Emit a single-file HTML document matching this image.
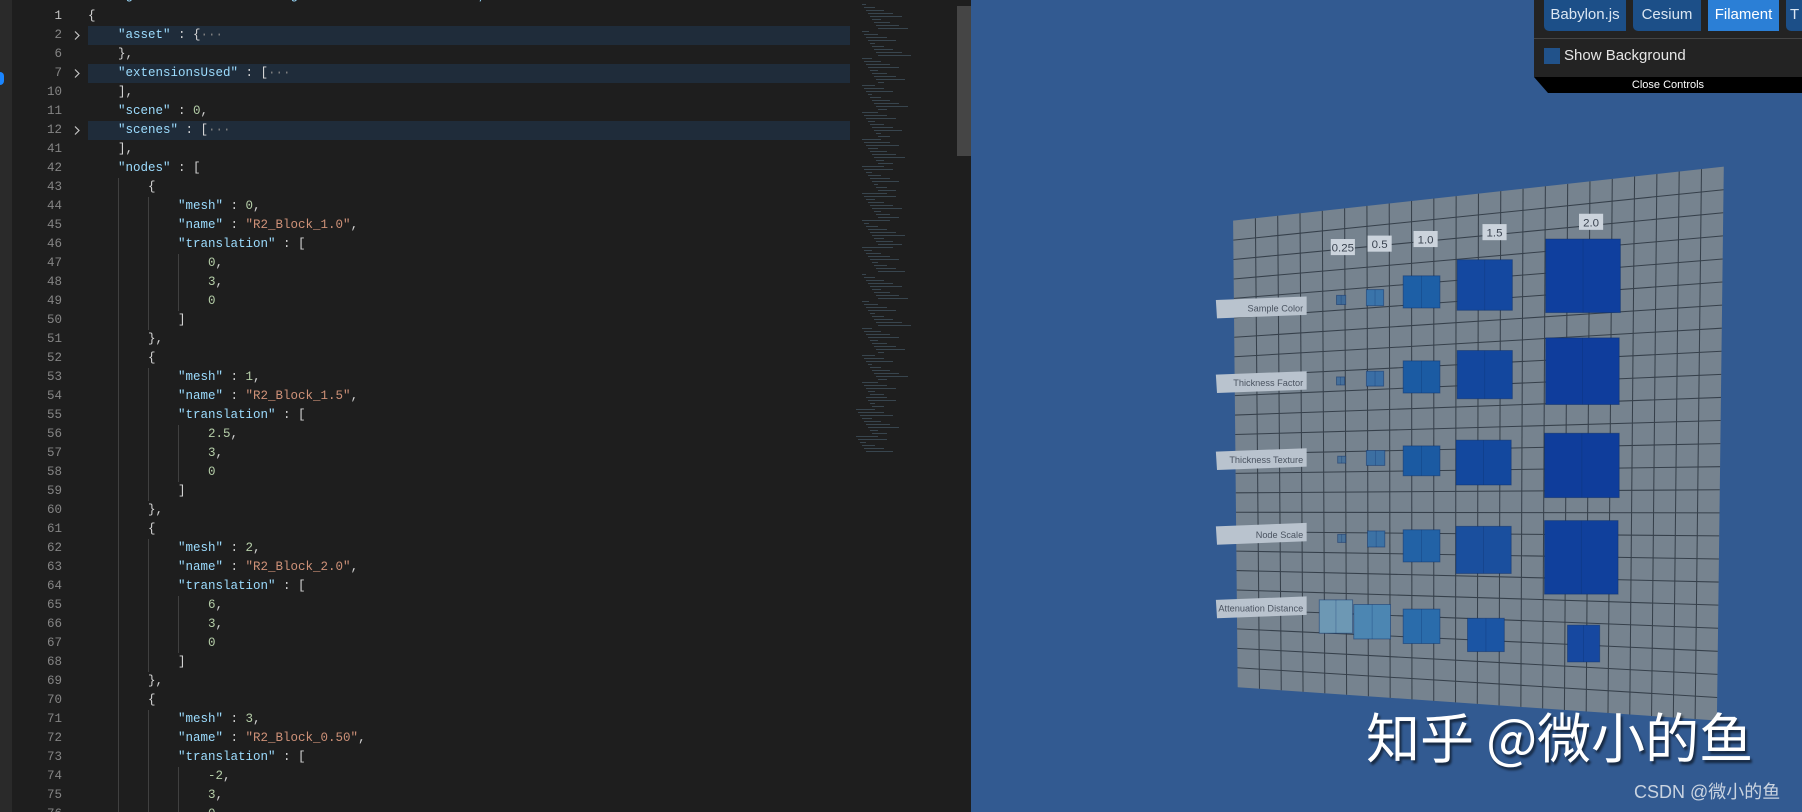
<!DOCTYPE html>
<html><head><meta charset="utf-8">
<style>
html,body{margin:0;padding:0;width:1802px;height:812px;overflow:hidden;background:#1e1e1e;}
#ed{position:absolute;left:0;top:0;width:971px;height:812px;background:#1e1e1e;overflow:hidden;font-family:"Liberation Mono",monospace;font-size:12.5px;}
.strip{position:absolute;left:0;top:0;width:12px;height:812px;background:#2a2a2a;}
.ln{position:absolute;left:20px;width:42px;text-align:right;color:#858585;height:19px;line-height:19px;}
.cd{position:absolute;left:88px;height:19px;line-height:19px;white-space:pre;color:#d4d4d4;}
.hl{position:absolute;left:88px;width:762px;height:19px;background:#1f2c3a;}
.fa{position:absolute;left:73px;width:8px;height:19px;}
.k{color:#9cdcfe}.s{color:#ce9178}.n{color:#b5cea8}.e{color:#808080}
.g{position:absolute;width:1px;background:#404040;}
#view{position:absolute;left:971px;top:0;width:831px;height:812px;background:#325a91;}
</style></head><body>
<div id="ed">
<div class="strip"></div>
<div style="position:absolute;left:0;top:72px;width:4px;height:13px;border-radius:0 7px 7px 0;background:#1a85ff"></div>
<div id="code"></div>
<div style="position:absolute;left:856px;top:4px;width:50px;height:520px" id="mini"></div>
<div style="position:absolute;left:957px;top:6px;width:14px;height:150px;background:#454545"></div>
</div>
<div id="view"></div>
<svg style="position:absolute;left:0;top:0" width="1802" height="812" viewBox="0 0 1802 812">
<g transform="scale(1.1492)" id="scene"></g>
</svg>
<div style="position:absolute;left:1534px;top:0;width:268px;height:77px;background:#232323"></div>
<div style="position:absolute;left:1534px;top:77px;width:268px;height:16px;background:#000;color:#fff;font:11px 'Liberation Sans',sans-serif;line-height:16px;text-align:center;clip-path:polygon(0 0,100% 0,100% 100%,14px 100%)">Close Controls</div>
<div style="position:absolute;left:1534px;top:38px;width:268px;height:1px;background:#444"></div>
<div style="position:absolute;top:0;height:31px;left:1544px;width:82px;background:#1c4f88;color:#dbe6f2;font:15px 'Liberation Sans',sans-serif;line-height:30px;text-align:center;border-radius:0 0 0 5px">Babylon.js</div>
<div style="position:absolute;top:0;height:31px;left:1633px;width:68px;background:#1c4f88;color:#dbe6f2;font:15px 'Liberation Sans',sans-serif;line-height:30px;text-align:center;border-radius:0 0 0 5px">Cesium</div>
<div style="position:absolute;top:0;height:31px;left:1708px;width:71px;background:#2b7fd6;color:#fff;font:15px 'Liberation Sans',sans-serif;line-height:30px;text-align:center">Filament</div>
<div style="position:absolute;top:0;height:31px;left:1786px;width:16px;background:#1c4f88;color:#dbe6f2;font:15px 'Liberation Sans',sans-serif;line-height:30px;padding-left:4px;box-sizing:border-box;border-radius:0 0 0 5px">T</div>
<div style="position:absolute;left:1544px;top:48px;width:16px;height:16px;background:#21528a"></div>
<div style="position:absolute;left:1564px;top:47px;color:#e6e6e6;font:15px 'Liberation Sans',sans-serif;line-height:18px">Show Background</div>
<div style="position:absolute;left:1366px;top:700px;color:#fff;font:54px 'Noto Sans CJK SC',sans-serif;line-height:70px;text-shadow:2px 3px 2px rgba(0,0,0,.55);white-space:nowrap">知乎 @微小的鱼</div>
<div style="position:absolute;left:1634px;top:781px;color:#c9d3e0;font:18px 'Liberation Sans','Noto Sans CJK SC',sans-serif;line-height:22px;white-space:nowrap">CSDN @微小的鱼</div>
<script>
var L=[
[1,0,'{'],[2,1,'<span class=k>"asset"</span> : {<span class=e>···</span>','f'],[6,1,'},'],[7,1,'<span class=k>"extensionsUsed"</span> : [<span class=e>···</span>','f'],[10,1,'],'],[11,1,'<span class=k>"scene"</span> : <span class=n>0</span>,'],[12,1,'<span class=k>"scenes"</span> : [<span class=e>···</span>','f'],[41,1,'],'],[42,1,'<span class=k>"nodes"</span> : [']];
var names=['1.0','1.5','2.0','0.50'],tr=[['0','3','0'],['2.5','3','0'],['6','3','0'],['-2','3','0']];
var no=43;
for(var m=0;m<4;m++){
L.push([no++,2,'{']);
L.push([no++,3,'<span class=k>"mesh"</span> : <span class=n>'+m+'</span>,']);
L.push([no++,3,'<span class=k>"name"</span> : <span class=s>"R2_Block_'+names[m]+'"</span>,']);
L.push([no++,3,'<span class=k>"translation"</span> : [']);
for(var j=0;j<3;j++)L.push([no++,4,'<span class=n>'+tr[m][j]+'</span>'+(j<2?',':'')]);
L.push([no++,3,']']);
L.push([no++,2,'},']);
}
var h='';
h+='<div class="cd" style="top:-13px;color:#9cdcfe">    "generator" : "Khronos glTF Blender I/O v1.2.75",</div>';
for(var i=0;i<L.length&&i<44;i++){
var t=6.5+19*i,l=L[i];
if(l[3])h+='<div class="hl" style="top:'+t+'px"></div><svg class="fa" style="top:'+t+'px" viewBox="0 0 8 19"><path d="M2 5.5 L6 9.5 L2 13.5" fill="none" stroke="#c5c5c5" stroke-width="1.2"/></svg>';
h+='<div class="ln" style="top:'+t+'px;'+(i==0?'color:#c6c6c6':'')+'">'+l[0]+'</div>';
h+='<div class="cd" style="top:'+t+'px;left:'+(88+30*l[1])+'px">'+l[2]+'</div>';
for(var g=1;g<l[1];g++)h+='<div class="g" style="left:'+(88+30*g)+'px;top:'+t+'px;height:19px"></div>';
}
document.getElementById('code').innerHTML=h;
var mh='';for(var i=0;i<150;i++){var w=4+((i*37)%30);mh+='<div style="position:absolute;left:'+((i%9)*2+(i>130?0:6))+'px;top:'+(i*3)+'px;width:'+w+'px;height:1px;background:#6b8fa8;opacity:.35"></div>';}
document.getElementById('mini').innerHTML=mh;
var NS='http://www.w3.org/2000/svg',S=document.getElementById('scene');
function el(n,a,tx){var e=document.createElementNS(NS,n);for(var k in a)e.setAttribute(k,a[k]);if(tx)e.textContent=tx;S.appendChild(e);return e;}
var TL=[1073,192],TR=[1500,145],BR=[1494,627],BL=[1077,598];
el('polygon',{points:TL+' '+TR+' '+BR+' '+BL,fill:'#76838f'});
function P(u,v){var a=[TL[0]+(TR[0]-TL[0])*u,TL[1]+(TR[1]-TL[1])*u],b=[BL[0]+(BR[0]-BL[0])*u,BL[1]+(BR[1]-BL[1])*u];return [a[0]+(b[0]-a[0])*v,a[1]+(b[1]-a[1])*v];}
var C=22,R=24;
for(var i=1;i<C;i++){var a=P(i/C,0),b=P(i/C,1);el('line',{x1:a[0],y1:a[1],x2:b[0],y2:b[1],stroke:'#36404b','stroke-width':0.9});}
for(var i=1;i<R;i++){var a=P(0,i/R),b=P(1,i/R);el('line',{x1:a[0],y1:a[1],x2:b[0],y2:b[1],stroke:'#36404b','stroke-width':0.9});}
var labs=[['Sample Color',258],['Thickness Factor',323],['Thickness Texture',390],['Node Scale',455],['Attenuation Distance',519]];
labs.forEach(function(l){el('polygon',{points:'1058,'+(l[1]+3)+' 1137,'+l[1]+' 1137,'+(l[1]+16)+' 1059,'+(l[1]+19),fill:'#b9c3ce'});el('text',{x:1134,y:l[1]+13,'text-anchor':'end','font-size':8,fill:'#4a5360','font-family':'Liberation Sans'},l[0]);});
[['0.25',1158,208],['0.5',1190,205],['1.0',1230,201],['1.5',1290,195],['2.0',1374,186]].forEach(function(c){el('rect',{x:c[1],y:c[2],width:21,height:14,fill:'#cbd3dc'});el('text',{x:c[1]+10.5,y:c[2]+11,'text-anchor':'middle','font-size':10,fill:'#3a4350','font-family':'Liberation Sans'},c[0]);});
var cubes=[[1163,257,8,8,'#3f6b98'],[1189,252,15,14,'#3a74aa'],[1221,240,32,28,'#1d5fa6'],[1268,226,48,44,'#1448a0'],[1345,208,65,64,'#0f3f9e'],
[1163,328,7,7,'#456f9a'],[1189,323,15,13,'#3a6ea5'],[1221,314,32,28,'#1b5ba3'],[1268,305,48,42,'#13479e'],[1345,294,64,58,'#0f3d9c'],
[1164,397,7,6,'#4a7298'],[1189,392,16,13,'#3c6fa2'],[1221,388,32,26,'#1b5aa2'],[1267,383,48,39,'#13489e'],[1344,377,65,56,'#0f3d9b'],
[1164,465,7,7,'#4a7298'],[1190,462,15,14,'#3c72a5'],[1221,461,32,28,'#2262a6'],[1267,458,48,41,'#1a4f9e'],[1344,453,64,64,'#10409c'],
[1148,522,29,29,'#6d98b4'],[1178,526,32,30,'#4c86b2'],[1221,530,32,30,'#2a6cab'],[1277,538,32,29,'#1b55a4'],[1364,544,28,32,'#1648a0']];
cubes.forEach(function(c){el('rect',{x:c[0],y:c[1],width:c[2],height:c[3],fill:c[4],stroke:'#0d2f6a','stroke-opacity':.5,'stroke-width':.8});el('line',{x1:c[0]+c[2]/2,y1:c[1],x2:c[0]+c[2]/2,y2:c[1]+c[3],stroke:'#0d2f6a','stroke-opacity':.4,'stroke-width':.6});});
</script>
</body></html>
